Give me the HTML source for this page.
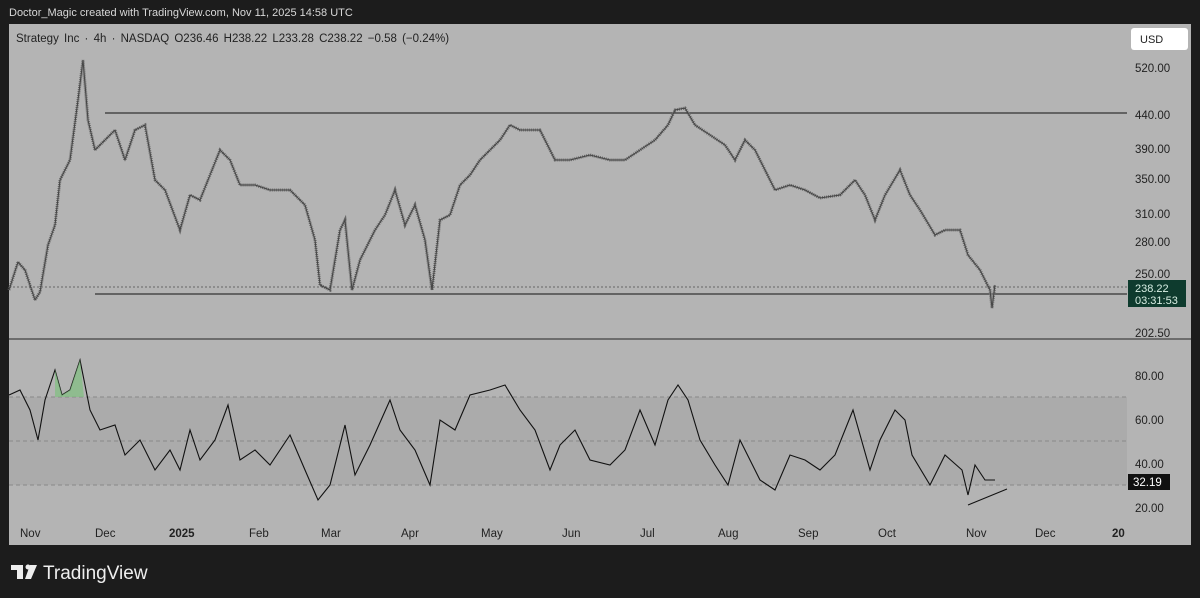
<!DOCTYPE html>
<html><head><meta charset="utf-8"><style>
body{margin:0;width:1200px;height:598px;background:#1c1c1c;overflow:hidden;font-family:"Liberation Sans",sans-serif}
</style></head><body>
<div style="position:absolute;left:9px;top:7px;color:#d8d8d8;font-size:11px">Doctor_Magic created with TradingView.com, Nov 11, 2025 14:58 UTC</div>
<svg width="1200" height="598" style="position:absolute;left:0;top:0" font-family="Liberation Sans, sans-serif">
<rect x="9" y="24" width="1182" height="521" fill="#b4b4b4"/>
<rect x="9" y="397" width="1118" height="88" fill="#ababab"/>
<g stroke="#888" stroke-dasharray="4,3" stroke-width="1">
<line x1="9" y1="397" x2="1127" y2="397"/><line x1="9" y1="441" x2="1127" y2="441"/><line x1="9" y1="485" x2="1127" y2="485"/></g>
<line x1="9" y1="339" x2="1191" y2="339" stroke="#555" stroke-width="1.5"/>
<line x1="105" y1="113" x2="1127" y2="113" stroke="#333" stroke-width="1.2"/>
<line x1="95" y1="294" x2="1127" y2="294" stroke="#333" stroke-width="1.2"/>
<line x1="9" y1="287" x2="1127" y2="287" stroke="#666" stroke-dasharray="2,2"/>
<polyline fill="none" stroke="#666" stroke-width="3" stroke-dasharray="1,1" points="9,290 18,262 25,270 35,300 40,292 48,245 55,225 60,180 70,160 78,100 83,60 88,120 95,150 105,140 115,130 125,160 135,130 145,125 155,180 165,190 180,230 190,195 200,200 210,175 220,150 230,160 240,185 255,185 270,190 290,190 305,205 315,240 320,285 330,290 340,230 345,220 352,290 360,260 375,230 385,215 395,190 405,225 415,205 425,240 432,290 440,220 450,215 460,185 470,175 480,160 490,150 500,140 510,125 520,130 540,130 555,160 570,160 590,155 610,160 625,160 640,150 655,140 668,125 675,110 685,108 695,125 710,135 725,145 735,160 745,140 755,150 765,170 775,190 790,185 805,190 820,198 840,195 855,180 865,195 875,220 885,195 900,170 910,195 920,210 935,235 945,230 960,230 968,255 980,270 990,290 992,308 995,285"/>
<polyline fill="none" stroke="#444" stroke-width="1" points="9,290 18,262 25,270 35,300 40,292 48,245 55,225 60,180 70,160 78,100 83,60 88,120 95,150 105,140 115,130 125,160 135,130 145,125 155,180 165,190 180,230 190,195 200,200 210,175 220,150 230,160 240,185 255,185 270,190 290,190 305,205 315,240 320,285 330,290 340,230 345,220 352,290 360,260 375,230 385,215 395,190 405,225 415,205 425,240 432,290 440,220 450,215 460,185 470,175 480,160 490,150 500,140 510,125 520,130 540,130 555,160 570,160 590,155 610,160 625,160 640,150 655,140 668,125 675,110 685,108 695,125 710,135 725,145 735,160 745,140 755,150 765,170 775,190 790,185 805,190 820,198 840,195 855,180 865,195 875,220 885,195 900,170 910,195 920,210 935,235 945,230 960,230 968,255 980,270 990,290 992,308 995,285"/>
<polyline fill="none" stroke="#111" stroke-width="1.1" points="9,395 20,390 30,410 38,440 45,400 55,370 62,395 70,390 80,360 90,410 100,430 115,425 125,455 140,440 155,470 170,450 180,470 190,430 200,460 215,440 228,405 240,460 255,450 270,465 290,435 305,470 318,500 330,485 345,425 355,475 370,445 390,400 400,430 415,450 430,485 440,420 455,430 470,395 490,390 505,385 520,410 535,430 550,470 560,445 575,430 590,460 610,465 625,450 640,410 655,445 668,400 678,385 688,400 700,440 715,465 728,485 740,440 760,480 775,490 790,455 805,460 820,470 835,455 853,410 870,470 880,440 895,410 905,420 912,455 930,485 945,455 962,470 968,495 975,465 985,480 995,480"/>
<polygon points="55,397 55,370 62,395 70,390 80,360 84,397" fill="#7fbf7f" opacity=".7"/>
<line x1="968" y1="505" x2="1007" y2="489" stroke="#111"/>
<g font-size="11.5" fill="#222">
<text x="1135" y="72">520.00</text><text x="1135" y="119">440.00</text><text x="1135" y="153">390.00</text><text x="1135" y="183">350.00</text><text x="1135" y="218">310.00</text><text x="1135" y="246">280.00</text><text x="1135" y="278">250.00</text><text x="1135" y="337">202.50</text>
<text x="1135" y="380">80.00</text><text x="1135" y="424">60.00</text><text x="1135" y="468">40.00</text><text x="1135" y="512">20.00</text>
<text x="20" y="537">Nov</text><text x="95" y="537">Dec</text><text x="169" y="537" font-weight="bold">2025</text><text x="249" y="537">Feb</text><text x="321" y="537">Mar</text><text x="401" y="537">Apr</text><text x="481" y="537">May</text><text x="562" y="537">Jun</text><text x="640" y="537">Jul</text><text x="718" y="537">Aug</text><text x="798" y="537">Sep</text><text x="878" y="537">Oct</text><text x="966" y="537">Nov</text><text x="1035" y="537">Dec</text><text x="1112" y="537" font-weight="bold">20</text>
<text x="16" y="42" font-size="11.5" word-spacing="2">Strategy Inc · 4h · NASDAQ  O236.46  H238.22  L233.28  C238.22  −0.58 (−0.24%)</text>
</g>
<rect x="1131" y="28" width="57" height="22" rx="3" fill="#fff"/><text x="1140" y="43" font-size="11" fill="#222">USD</text>
<rect x="1128" y="280" width="58" height="27" fill="#0e3b2e"/>
<text x="1135" y="292" font-size="11" fill="#d8efe4">238.22</text><text x="1135" y="304" font-size="11" fill="#d8efe4">03:31:53</text>
<rect x="1128" y="474" width="42" height="16" fill="#111"/><text x="1133" y="486" font-size="11.5" fill="#fff">32.19</text>
<g fill="#eee"><rect x="11" y="565" width="12" height="5"/><rect x="17" y="565" width="6" height="14"/><circle cx="28" cy="567" r="2.5"/><polygon points="30,565 37,565 31,579 25,579"/></g>
<text x="43" y="579" font-size="19" fill="#eee">TradingView</text>
</svg>
</body></html>
